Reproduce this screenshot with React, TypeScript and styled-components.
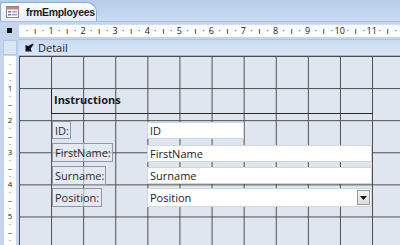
import * as React from "react";
import styled, { createGlobalStyle } from "styled-components";

const UNIT = 32.1;

const GlobalStyle = createGlobalStyle`
  html, body {
    margin: 0;
    padding: 0;
    overflow: hidden;
    background: #c3d6ee;
  }
  body {
    font-family: "Open Sans", "Noto Sans", sans-serif;
  }
`;

const Window = styled.div`
  width: 400px;
  height: 245px;
  display: flex;
  flex-direction: column;
  overflow: hidden;
  background: #c3d6ee;
`;

const TabStrip = styled.div`
  height: 21px;
  display: flex;
  align-items: flex-end;
  background: linear-gradient(#b6cce9, #c9dbf1);
  border-bottom: 1px solid #a9c0df;
`;

const Tab = styled.div`
  height: 19px;
  width: 97px;
  display: flex;
  align-items: center;
  gap: 7px;
  padding-left: 5px;
  box-sizing: border-box;
  background: linear-gradient(#fbfcfe, #e6eef9);
  border: 1px solid #8fa9cf;
  border-bottom: none;
  border-radius: 3px 10px 0 0;
  font-family: "Liberation Sans", Arial, sans-serif;
  font-size: 10.5px;
  font-weight: 700;
  color: #1b1b1b;
  letter-spacing: -0.3px;
  white-space: nowrap;

  svg {
    flex-shrink: 0;
  }
`;

const RulerRow = styled.div`
  height: 17px;
  display: flex;
  align-items: stretch;
  background: #c3d6ee;
`;

const Corner = styled.div`
  width: 19px;
  display: flex;
  align-items: center;
  justify-content: center;
  &::before {
    content: "";
    width: 5px;
    height: 5px;
    background: #111;
  }
`;

const TopRuler = styled.div`
  flex: 1;
  margin: 2px 0 2px 0;
  background: #fdfeff;
  border-top: 1px solid #d5e1f1;
  display: flex;
  align-items: center;
  overflow: hidden;
`;

const HSlot = styled.span`
  flex: 0 0 ${UNIT / 4}px;
  min-width: 0;
  display: flex;
  justify-content: center;
  font-size: 9px;
  line-height: 10px;
  color: #222;
  white-space: nowrap;
  &:first-child {
    margin-left: -${UNIT / 8}px;
  }
`;

const Body = styled.div`
  flex: 1;
  display: flex;
  min-height: 0;
`;

const LeftColumn = styled.div`
  width: 19px;
  display: flex;
  flex-direction: column;
  background: #c3d6ee;
`;

const SelectorBox = styled.div`
  height: 15px;
  margin: 1px 2px 1px 3px;
  background: #dbe6f5;
  border: 1px solid #b4c8e4;
  box-sizing: border-box;
`;

const LeftRuler = styled.div`
  flex: 1;
  margin: 0 3px 0 4px;
  background: #fdfeff;
  display: flex;
  flex-direction: column;
  overflow: hidden;
`;

const VSlot = styled.span`
  flex: 0 0 ${UNIT / 4}px;
  min-height: 0;
  display: flex;
  align-items: center;
  justify-content: center;
  font-size: 8px;
  line-height: 8px;
  color: #222;
  &:first-child {
    margin-top: -${UNIT / 8}px;
  }
`;

const Main = styled.div`
  flex: 1;
  display: flex;
  flex-direction: column;
  min-width: 0;
`;

const SectionBar = styled.div`
  height: 17px;
  display: flex;
  align-items: center;
  gap: 4px;
  padding-left: 6px;
  box-sizing: border-box;
  background: linear-gradient(#c9daf0, #dae6f6);
  border-top: 1px solid #aec4e2;
  border-bottom: 1px solid #9fb6d6;
  font-size: 11px;
  color: #1e1e1e;
`;

const Canvas = styled.div`
  position: relative;
  flex: 1;
  background-color: #dfe6ef;
  background-image: linear-gradient(to right, #4c4c4c 1px, transparent 1px),
    linear-gradient(to bottom, #4c4c4c 1px, transparent 1px);
  background-size: ${UNIT}px ${UNIT}px;
  background-position: 0 0;
  overflow: hidden;
`;

const Control = styled.div<{ $x: number; $y: number; $w: number; $h: number }>`
  position: absolute;
  left: ${(p) => p.$x}px;
  top: ${(p) => p.$y}px;
  width: ${(p) => p.$w}px;
  height: ${(p) => p.$h}px;
  box-sizing: border-box;
  display: flex;
  align-items: center;
  font-size: 11px;
  color: #1a1a1a;
  white-space: nowrap;
`;

const Heading = styled(Control)`
  border-left: 1px solid #2a2a2a;
  border-bottom: 1px solid #2a2a2a;
  padding: 0 0 3px 2px;
  font-weight: 700;
  font-size: 11px;
`;

const Label = styled(Control)`
  border: 1px solid #8e98a6;
  background: rgba(232, 237, 244, 0.6);
  padding-left: 2px;
  color: #2b2b2b;
`;

const TextBox = styled(Control)`
  background: #ffffff;
  border: 1px solid #cfd6df;
  padding-left: 2px;
  justify-content: space-between;
`;

const DropButton = styled.div`
  width: 13px;
  height: 15px;
  margin-right: 1px;
  display: flex;
  align-items: center;
  justify-content: center;
  background: linear-gradient(#f4f4f4, #dcdcdc);
  border: 1px solid #9a9a9a;
  box-sizing: border-box;
`;

const FormIcon = () => (
  <svg width="13" height="12" viewBox="0 0 13 12">
    <rect x="0.5" y="0.5" width="12" height="11" fill="#f8f8f8" stroke="#8a8a8a" />
    <rect x="1" y="1" width="11" height="2.5" fill="#d9797a" />
    <rect x="2" y="5" width="3" height="1.5" fill="#6a7fa6" />
    <rect x="6" y="5" width="5" height="1.5" fill="#9aa9c4" />
    <rect x="2" y="8" width="3" height="1.5" fill="#6a7fa6" />
    <rect x="6" y="8" width="5" height="1.5" fill="#9aa9c4" />
  </svg>
);

const SectionIcon = () => (
  <svg width="9" height="9" viewBox="0 0 9 9">
    <path d="M8 0.5 L3 3 L0.5 2 L0.5 8.5 L7 8.5 L5.5 6 L8.5 1.5 Z" fill="#111" />
  </svg>
);

const DownArrow = () => (
  <svg width="7" height="4" viewBox="0 0 7 4">
    <path d="M0 0 H7 L3.5 4 Z" fill="#111" />
  </svg>
);

const mark = (i: number, half: string) => {
  const q = i % 4;
  if (i === 0) return "";
  if (q === 0) return String(i / 4);
  if (q === 2) return half;
  return "·";
};

export default function App() {
  const top = Array.from({ length: 48 }, (_, i) => mark(i, "ı"));
  const left = Array.from({ length: 24 }, (_, i) => mark(i, "–"));

  return (
    <Window>
      <GlobalStyle />
      <TabStrip>
        <Tab>
          <FormIcon />
          frmEmployees
        </Tab>
      </TabStrip>
      <RulerRow>
        <Corner />
        <TopRuler>
          {top.map((m, i) => (
            <HSlot key={i}>{m}</HSlot>
          ))}
        </TopRuler>
      </RulerRow>
      <Body>
        <LeftColumn>
          <SelectorBox />
          <LeftRuler>
            {left.map((m, i) => (
              <VSlot key={i}>{m}</VSlot>
            ))}
          </LeftRuler>
        </LeftColumn>
        <Main>
          <SectionBar>
            <SectionIcon />
            Detail
          </SectionBar>
          <Canvas>
            <Heading $x={32} $y={32} $w={322} $h={26}>
              Instructions
            </Heading>
            <Label $x={33} $y={65} $w={19} $h={18}>
              ID:
            </Label>
            <Label $x={33} $y={87} $w={61} $h={19}>
              FirstName:
            </Label>
            <Label $x={33} $y={110} $w={54} $h={19}>
              Surname:
            </Label>
            <Label $x={33} $y={132} $w={50} $h={19}>
              Position:
            </Label>
            <TextBox $x={128} $y={66} $w={97} $h={17}>
              ID
            </TextBox>
            <TextBox $x={128} $y={89} $w={225} $h={17}>
              FirstName
            </TextBox>
            <TextBox $x={128} $y={111} $w={225} $h={17}>
              Surname
            </TextBox>
            <TextBox $x={128} $y={132} $w={225} $h={19}>
              Position
              <DropButton>
                <DownArrow />
              </DropButton>
            </TextBox>
          </Canvas>
        </Main>
      </Body>
    </Window>
  );
}
